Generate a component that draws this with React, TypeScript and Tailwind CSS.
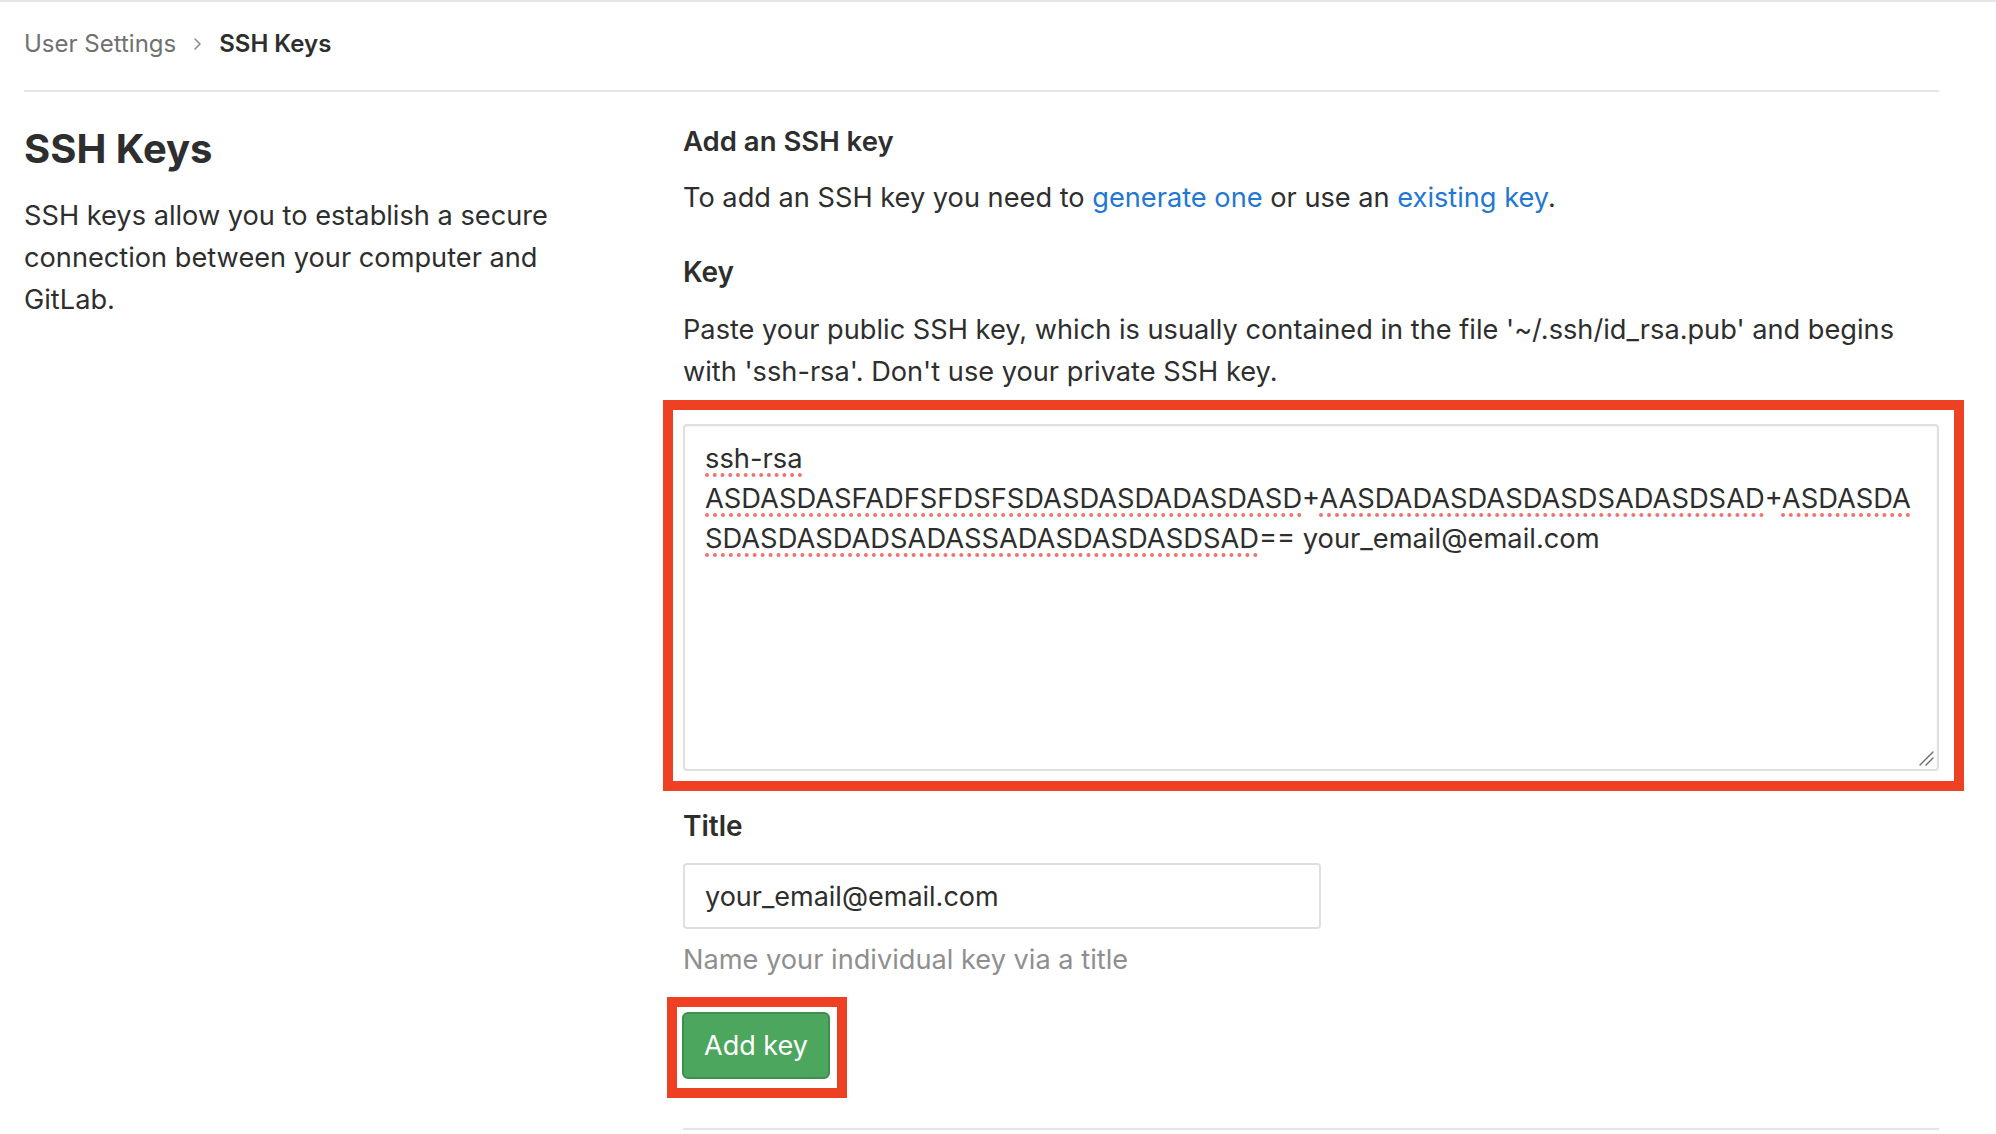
import React from "react";

const Spell = ({ children }: { children: React.ReactNode }) => (
  <span className="underline decoration-dotted decoration-[#f07272] decoration-[4px] underline-offset-[5px]">
    {children}
  </span>
);

export default function App() {
  return (
    <div className="min-h-screen bg-white text-[#2e2e2e] font-['Inter','Liberation_Sans',sans-serif]">
      <div className="h-[2px] bg-[#e5e5e5]" />
      <div className="pl-[24px] pr-[57px]">
        <nav className="flex h-[88px] items-center pb-[4px] text-[24px] leading-[32px]">
          <span className="text-[#707070]">User Settings</span>
          <svg className="mx-[17px]" width="9" height="14" viewBox="0 0 9 14" fill="none">
            <path d="M2 2l5 5-5 5" stroke="#8c8c8c" strokeWidth="1.6" strokeLinecap="round" strokeLinejoin="round" />
          </svg>
          <span className="font-semibold text-[#2e2e2e]">SSH Keys</span>
        </nav>
        <div className="h-[2px] bg-[#e5e5e5]" />
        <div className="grid grid-cols-[659px_1fr]">
          <div>
            <h3 className="mt-[33px] text-[40px] font-bold leading-[48px]">SSH Keys</h3>
            <p className="mt-[22px] text-[27.2px] leading-[42px]">
              SSH keys allow you to establish a secure
              <br />
              connection between your computer and
              <br />
              GitLab.
            </p>
          </div>
          <div>
            <h4 className="mt-[31px] text-[27.5px] font-semibold leading-[36px]">Add an SSH key</h4>
            <p className="mt-[18px] text-[27.2px] leading-[42px]">
              To add an SSH key you need to{" "}
              <a className="text-[#1f78d1]">generate one</a> or use an{" "}
              <a className="text-[#1f78d1]">existing key</a>.
            </p>
            <div className="mt-[35px] text-[28px] font-semibold leading-[36px]">Key</div>
            <p className="mt-[19px] text-[27.2px] leading-[42px]">
              Paste your public SSH key, which is usually contained in the file '~/.ssh/id_rsa.pub' and begins
              <br />
              with 'ssh-rsa'. Don't use your private SSH key.
            </p>
            <div className="mt-[7px] -ml-[20px] -mr-[25px] border-[10px] border-[#ee4124] pl-[10px] pt-[14px] pr-[15px] pb-[10px]">
              <div className="relative h-[347px] rounded-[4px] border-2 border-[#dfdfdf] px-[20px] pt-[13px] pb-[11px] text-[27.3px] leading-[40px] shadow-[inset_0_1px_2px_rgba(0,0,0,0.05)]">
                <div>
                  <Spell>ssh-rsa</Spell>
                </div>
                <div>
                  <Spell>ASDASDASFADFSFDSFSDASDASDADASDASD</Spell>+<Spell>AASDADASDASDASDSADASDSAD</Spell>+<Spell>ASDASDA</Spell>
                </div>
                <div>
                  <Spell>SDASDASDADSADASSADASDASDASDSAD</Spell>== your_email@email.com
                </div>
                <svg className="absolute bottom-[3px] right-[3px]" width="16" height="16" viewBox="0 0 16 16" fill="none">
                  <path d="M15 2L2 15M15 8L8 15" stroke="#6b6b6b" strokeWidth="1.4" strokeLinecap="round" />
                </svg>
              </div>
            </div>
            <div className="mt-[17px] text-[28px] font-semibold leading-[36px]">Title</div>
            <div className="mt-[19px] flex h-[66px] w-[638px] items-center rounded-[4px] border-2 border-[#dfdfdf] px-[20px] pt-[3px] text-[27px]">
              your_email@email.com
            </div>
            <div className="mt-[10px] text-[27.2px] leading-[42px] text-[#8f8f8f]">Name your individual key via a title</div>
            <div className="mt-[16px] -ml-[16px] inline-block border-[10px] border-[#ee4124] pl-[5px] pt-[5px] pr-[7px] pb-[9px]">
              <button className="flex h-[67px] w-[148px] items-center justify-center rounded-[6px] border-2 border-[#3e8e4d] bg-[#4ca65d] pt-[2px] text-[27px] text-white">
                Add key
              </button>
            </div>
            <div className="mt-[30px] h-[2px] bg-[#e5e5e5]" />
          </div>
        </div>
      </div>
    </div>
  );
}
